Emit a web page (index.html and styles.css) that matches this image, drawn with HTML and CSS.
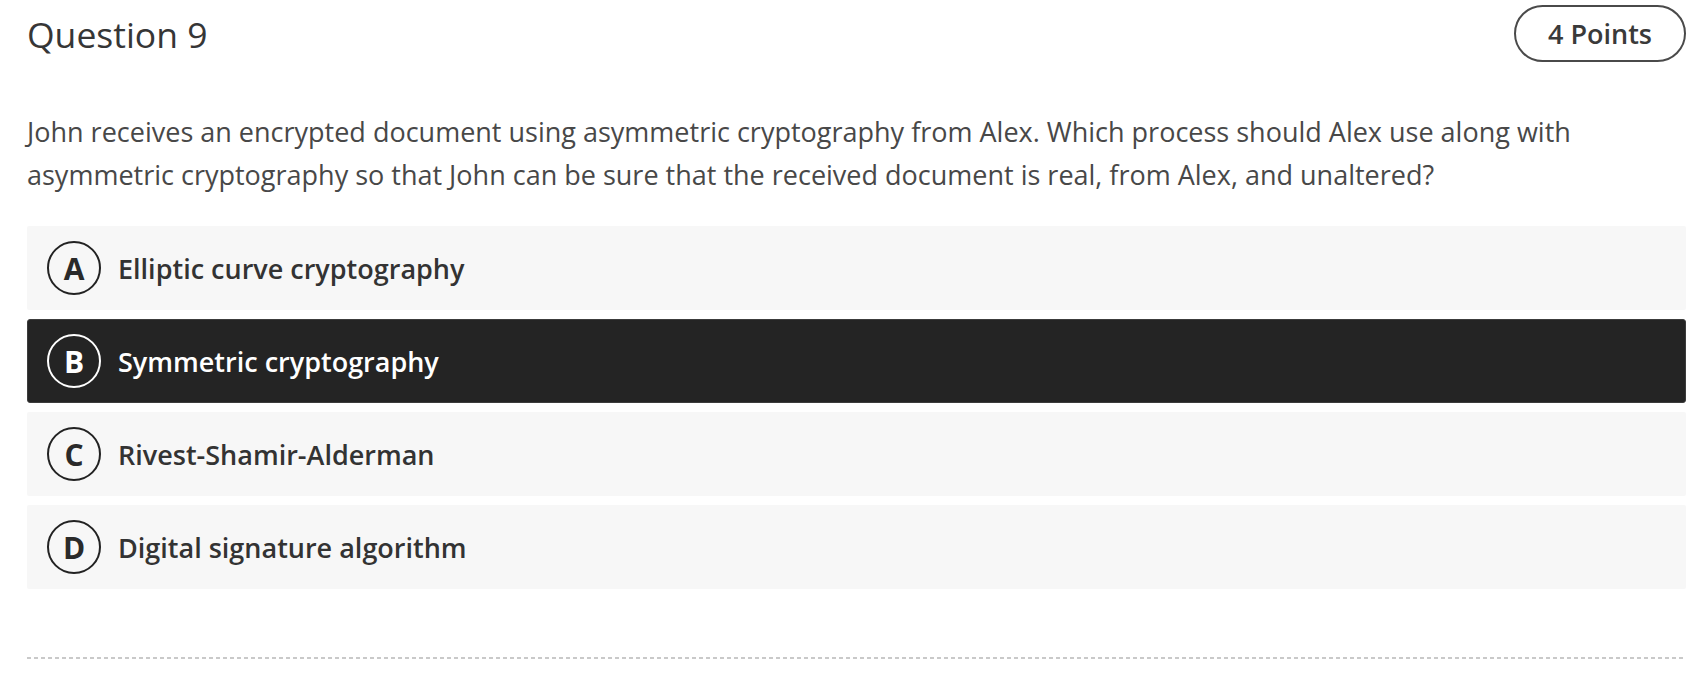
FILE: index.html
```html
<!DOCTYPE html>
<html lang="en">
<head>
<meta charset="utf-8">
<title>Question 9</title>
<link rel="stylesheet" href="styles.css">
</head>
<body>
<main class="page">
  <header class="q-header">
    <h1 class="q-title">Question 9</h1>
    <span class="points">4 Points</span>
  </header>
  <p class="q-text">John receives an encrypted document using asymmetric cryptography from Alex. Which process should Alex use along with asymmetric cryptography so that John can be sure that the received document is real, from Alex, and unaltered?</p>
  <ul class="options">
    <li class="option"><span class="letter">A</span><span class="label">Elliptic curve cryptography</span></li>
    <li class="option selected"><span class="letter">B</span><span class="label">Symmetric cryptography</span></li>
    <li class="option"><span class="letter">C</span><span class="label">Rivest-Shamir-Alderman</span></li>
    <li class="option"><span class="letter">D</span><span class="label">Digital signature algorithm</span></li>
  </ul>
  <div class="divider"></div>
</main>
</body>
</html>
```
FILE: styles.css
```css
* { box-sizing: border-box; }
html, body { margin: 0; padding: 0; background: #ffffff; }
body {
  font-family: "Open Sans", "DejaVu Sans", sans-serif;
  color: #333333;
}
.page {
  padding: 5px 19px 0 27px;
}
.q-header {
  display: flex;
  justify-content: space-between;
  align-items: center;
  height: 57px;
}
.q-title {
  margin: 0;
  font-size: 35.5px;
  font-weight: 400;
  color: #363636;
  line-height: normal;
}
.points {
  display: flex;
  align-items: center;
  justify-content: center;
  width: 172px;
  height: 57px;
  border: 2px solid #4a4a4a;
  border-radius: 30px;
  font-size: 27px;
  font-weight: 600;
  color: #3a3a3a;
}
.q-text {
  margin: 48px 0 0 0;
  max-width: 1620px;
  font-size: 27px;
  line-height: 43px;
  color: #484848;
}
.options {
  list-style: none;
  margin: 30px 0 0 0;
  padding: 0;
  display: flex;
  flex-direction: column;
  gap: 9px;
}
.option {
  display: flex;
  align-items: center;
  gap: 17px;
  height: 84px;
  padding-left: 20px;
  background: #f7f7f7;
  border-radius: 2px;
  color: #333333;
}
.option.selected {
  background: #242424;
  border: 1px solid #3c3c3c;
  padding-left: 19px;
  border-radius: 3px;
  color: #ffffff;
}
.letter {
  display: flex;
  align-items: center;
  justify-content: center;
  flex: none;
  width: 54px;
  height: 54px;
  border: 2px solid #222222;
  border-radius: 50%;
  font-size: 30px;
  font-weight: 700;
  color: #2a2a2a;
}
.selected .letter {
  border-color: #ffffff;
  color: #ffffff;
}
.label {
  font-size: 27px;
  font-weight: 600;
}
.divider {
  margin-top: 68px;
  height: 2px;
  background: repeating-linear-gradient(to right, #c9c9c9 0 4px, transparent 4px 7px);
}
```
